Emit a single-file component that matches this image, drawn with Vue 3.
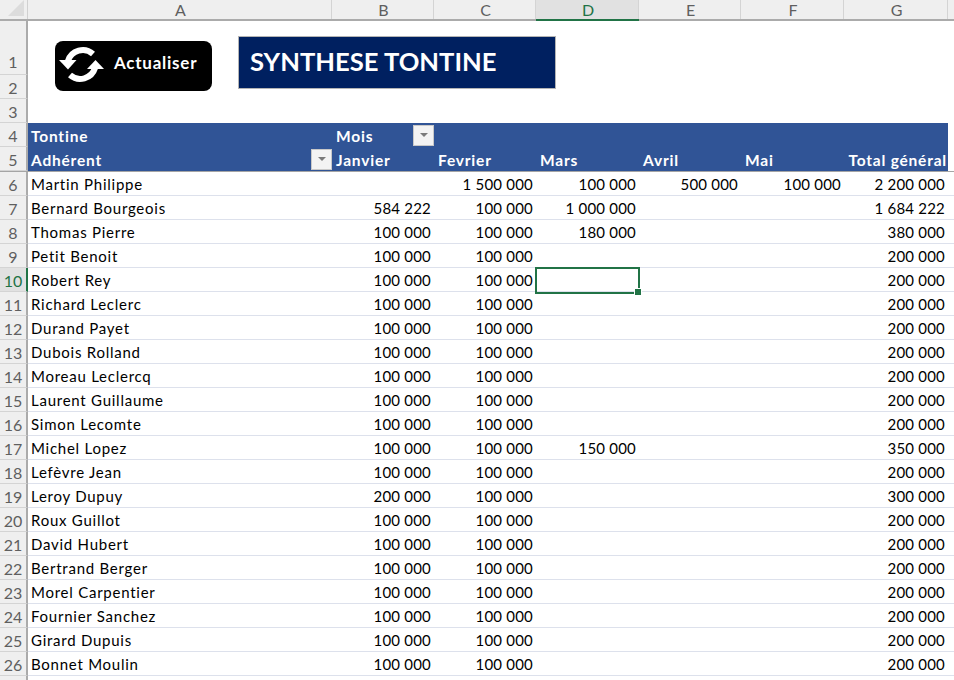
<script setup>
const columns = ['A', 'B', 'C', 'D', 'E', 'F', 'G']

// rows 6 to 26 of the pivot table
const rows = [
  ['Martin Philippe', '', '1 500 000', '100 000', '500 000', '100 000', '2 200 000'],
  ['Bernard Bourgeois', '584 222', '100 000', '1 000 000', '', '', '1 684 222'],
  ['Thomas Pierre', '100 000', '100 000', '180 000', '', '', '380 000'],
  ['Petit Benoit', '100 000', '100 000', '', '', '', '200 000'],
  ['Robert Rey', '100 000', '100 000', '', '', '', '200 000'],
  ['Richard Leclerc', '100 000', '100 000', '', '', '', '200 000'],
  ['Durand Payet', '100 000', '100 000', '', '', '', '200 000'],
  ['Dubois Rolland', '100 000', '100 000', '', '', '', '200 000'],
  ['Moreau Leclercq', '100 000', '100 000', '', '', '', '200 000'],
  ['Laurent Guillaume', '100 000', '100 000', '', '', '', '200 000'],
  ['Simon Lecomte', '100 000', '100 000', '', '', '', '200 000'],
  ['Michel Lopez', '100 000', '100 000', '150 000', '', '', '350 000'],
  ['Lefèvre Jean', '100 000', '100 000', '', '', '', '200 000'],
  ['Leroy Dupuy', '200 000', '100 000', '', '', '', '300 000'],
  ['Roux Guillot', '100 000', '100 000', '', '', '', '200 000'],
  ['David Hubert', '100 000', '100 000', '', '', '', '200 000'],
  ['Bertrand Berger', '100 000', '100 000', '', '', '', '200 000'],
  ['Morel Carpentier', '100 000', '100 000', '', '', '', '200 000'],
  ['Fournier Sanchez', '100 000', '100 000', '', '', '', '200 000'],
  ['Girard Dupuis', '100 000', '100 000', '', '', '', '200 000'],
  ['Bonnet Moulin', '100 000', '100 000', '', '', '', '200 000']
]

const months = ['Janvier', 'Fevrier', 'Mars', 'Avril', 'Mai']
</script>

<template>
  <div class="sheet">
    <div class="line col-head">
      <div class="corner"><span class="corner-mark"></span></div>
      <div v-for="col in columns" :key="col" class="col-label" :class="{ active: col === 'D' }">{{ col }}</div>
    </div>

    <div class="top-area">
      <div class="top-heads">
        <div class="num h54">1</div>
        <div class="num">2</div>
        <div class="num">3</div>
      </div>
      <div class="top-cells">
        <button class="refresh">
          <svg class="refresh-icon" viewBox="0 0 45 37" width="45" height="37">
            <path d="M9 15 A15.5 15.5 0 0 1 34 8" fill="none" stroke="#fff" stroke-width="6" />
            <path d="M0 14 L17.5 14 L9 23.5 Z" fill="#fff" />
            <path d="M36 22 A15.5 15.5 0 0 1 11 29" fill="none" stroke="#fff" stroke-width="6" />
            <path d="M28 23 L45 23 L36.5 14 Z" fill="#fff" />
          </svg>
          <span class="refresh-text">Actualiser</span>
        </button>
        <div class="title-box">SYNTHESE TONTINE</div>
      </div>
    </div>

    <div class="line">
      <div class="num">4</div>
      <div class="cell pivot label-a">Tontine</div>
      <div class="cell pivot label-b">
        <span>Mois</span>
        <span class="filter"><i></i></span>
      </div>
      <div class="pivot fill"></div>
    </div>

    <div class="line pivot-end">
      <div class="num">5</div>
      <div class="cell pivot label-a spread">
        <span>Adhérent</span>
        <span class="filter"><i></i></span>
      </div>
      <div v-for="m in months" :key="m" class="cell pivot month">{{ m }}</div>
      <div class="cell pivot right total">Total général</div>
    </div>

    <div v-for="(row, i) in rows" :key="i" class="line body-line">
      <div class="num" :class="{ active: i + 6 === 10 }">{{ i + 6 }}</div>
      <div class="cell name">{{ row[0] }}</div>
      <div v-for="(val, j) in row.slice(1)" :key="j" class="cell right amount">
        {{ val }}
        <div v-if="i + 6 === 10 && j === 2" class="selection"><span class="handle"></span></div>
      </div>
    </div>

    <div class="line">
      <div class="num"></div>
    </div>
  </div>
</template>

<style>
html,
body {
  margin: 0;
  background: #fff;
}
</style>

<style scoped>
.sheet {
  width: 954px;
  height: 680px;
  overflow: hidden;
  background: #fff;
  font-family: Lato, "Liberation Sans", sans-serif;
  font-size: 15px;
  color: #000;
}

.line {
  display: grid;
  grid-template-columns: 28px 304px 102px 102px 103px 102px 103px 104px;
  height: 24px;
}

.col-head {
  height: 21px;
  background: #efefef;
  border-bottom: 2px solid #ababab;
  box-sizing: border-box;
  color: #5f5f5f;
  font-size: 16px;
}

.corner {
  position: relative;
  border-right: 1px solid #d0d0d0;
}

.corner-mark {
  position: absolute;
  right: 3px;
  bottom: 3px;
  width: 0;
  height: 0;
  border-left: 16px solid transparent;
  border-bottom: 16px solid #dcdcdc;
}

.col-label {
  display: flex;
  align-items: center;
  justify-content: center;
  padding-left: 2px;
  border-right: 1px solid #d4d4d4;
}

.col-label.active {
  background: #e1e1e1;
  color: #217346;
  box-shadow: 0 2px 0 #217346;
}

.num {
  display: flex;
  align-items: center;
  justify-content: center;
  box-sizing: border-box;
  padding-top: 2px;
  background: #efefef;
  border-right: 2px solid #ababab;
  border-bottom: 1px solid #d4d4d4;
  color: #5f5f5f;
  font-size: 16px;
  height: 24px;
}

.num.h54 {
  height: 54px;
  padding-top: 28px;
}

.num.active {
  background: #e1e1e1;
  color: #217346;
  border-right-color: #217346;
}

.top-area {
  display: flex;
  height: 102px;
}

.top-heads {
  width: 28px;
  flex: none;
}

.top-cells {
  display: flex;
  align-items: flex-start;
  gap: 26px;
  padding: 15px 0 0 27px;
}

.refresh {
  display: flex;
  align-items: center;
  gap: 10px;
  box-sizing: border-box;
  width: 157px;
  height: 50px;
  margin-top: 5px;
  padding: 0 0 0 4px;
  border: none;
  border-radius: 8px;
  background: #000;
  color: #fff;
  font: bold 17px Lato, "Liberation Sans", sans-serif;
  letter-spacing: 0.75px;
}

.refresh-icon {
  flex: none;
  margin-bottom: 3px;
}

.refresh-text {
  margin-bottom: 8px;
}

.title-box {
  box-sizing: border-box;
  width: 318px;
  height: 53px;
  padding: 9px 0 0 11px;
  background: #002060;
  border: 1px solid #b4b4b4;
  color: #fff;
  font-size: 25.6px;
  font-weight: 700;
}

.cell {
  display: flex;
  align-items: center;
  box-sizing: border-box;
  padding: 0 3px;
  white-space: nowrap;
  position: relative;
}

.name {
  letter-spacing: 0.75px;
}

.amount {
  letter-spacing: 0.2px;
  padding-right: 3px;
}

.pivot {
  padding-top: 2px;
  background: #305496;
  color: #fff;
  font-weight: 700;
  font-size: 15.5px;
  letter-spacing: 0.8px;
}

.fill {
  grid-column: 4 / 9;
}

.label-b {
  justify-content: space-between;
  padding: 2px 0 0 4px;
}

.month {
  padding-left: 4px;
}

.total {
  padding-right: 1px;
}

.spread {
  justify-content: space-between;
  padding-right: 0;
}

.right {
  justify-content: flex-end;
}

.pivot-end {
  border-bottom: 1px solid #a5a5a5;
}

.filter {
  display: flex;
  align-items: center;
  justify-content: center;
  box-sizing: border-box;
  width: 21px;
  height: 21px;
  margin-top: -2px;
  background: #f3f3f3;
  border: 1px solid #c8c8c8;
}

.filter i {
  width: 0;
  height: 0;
  border-left: 4px solid transparent;
  border-right: 4px solid transparent;
  border-top: 4px solid #7a7a7a;
}

.body-line {
  border-bottom: 1px solid #dde1ec;
  box-sizing: border-box;
}

.body-line .num {
  height: 24px;
  margin-bottom: -1px;
}

.selection {
  position: absolute;
  left: -1px;
  top: -1px;
  width: 105px;
  height: 27px;
  box-sizing: border-box;
  border: 2px solid #217346;
}

.handle {
  position: absolute;
  right: -4px;
  bottom: -4px;
  width: 6px;
  height: 6px;
  background: #217346;
  border: 1px solid #fff;
}
</style>
